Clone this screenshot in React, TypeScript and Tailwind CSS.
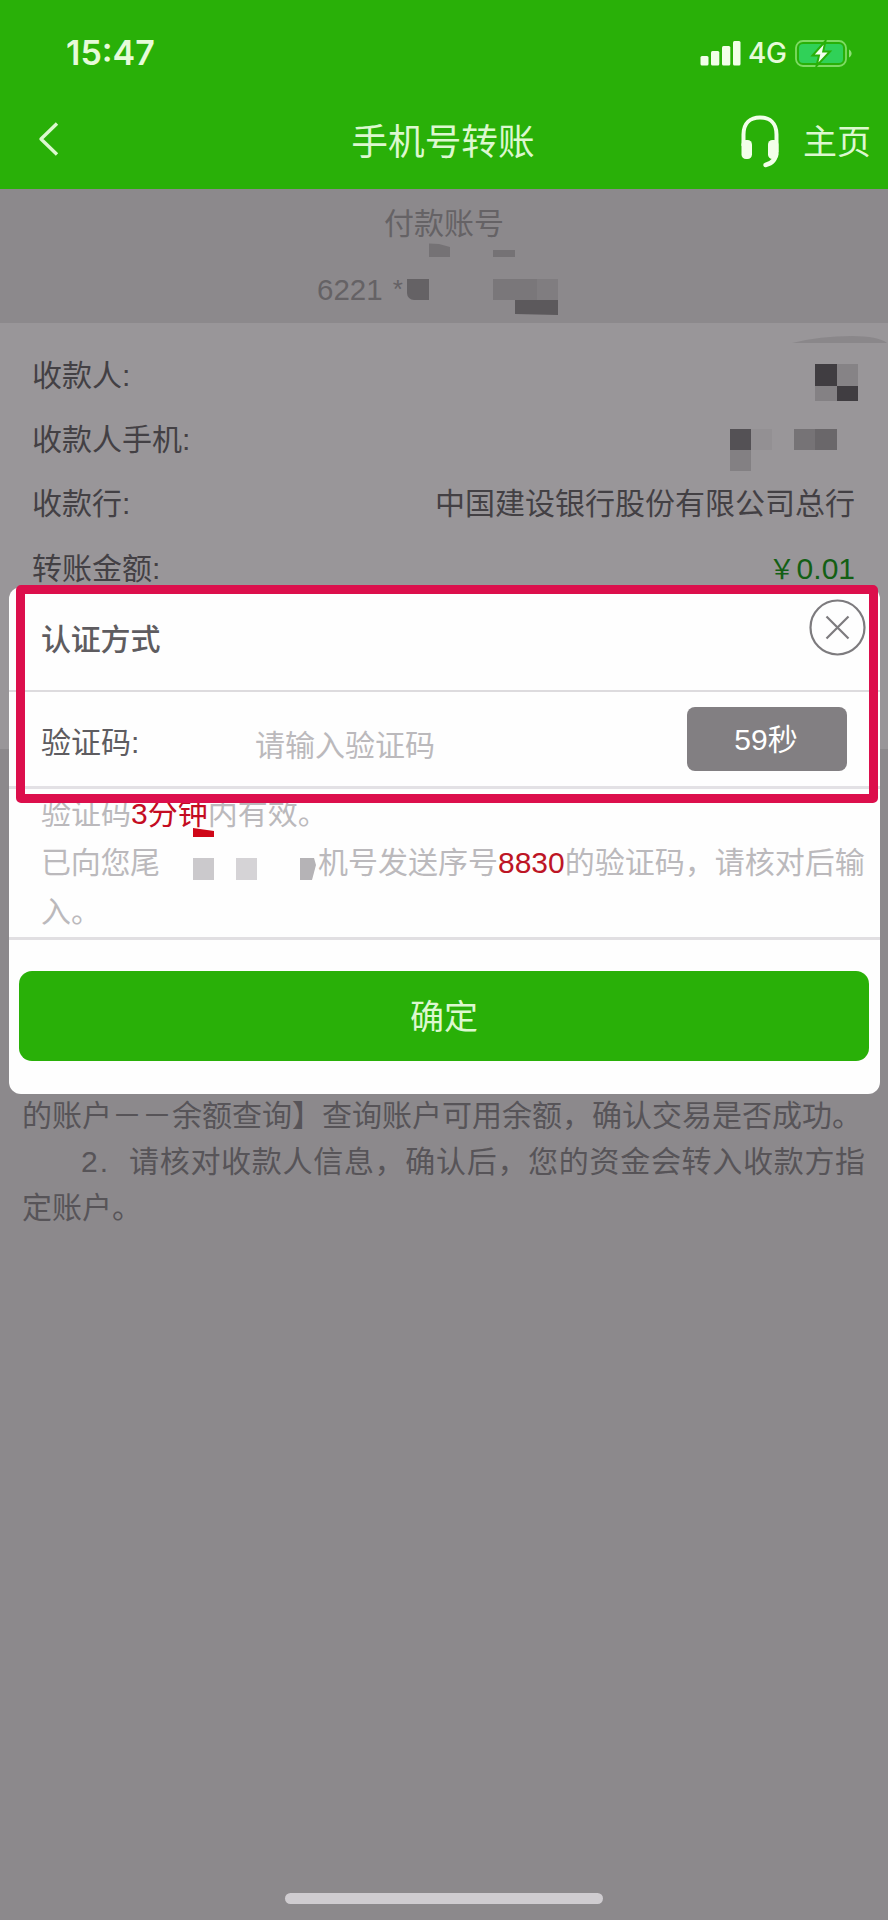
import type { ReactNode } from "react";

function StatusBar() {
  return (
    <div className="flex h-[106px] items-start justify-between pl-[66px] pr-[36px]">
      <span className="mt-[32px] font-['Inter'] text-[34px] font-semibold leading-[42px] text-[#e6fbd9]">
        15:47
      </span>
      <div className="mt-[39px] flex items-start">
        <svg width="41" height="28" viewBox="0 0 41 28" fill="#f2ffe9">
          <rect x="0.5" y="17" width="8" height="9.5" rx="1.5" />
          <rect x="11" y="12" width="8.3" height="14.5" rx="1.5" />
          <rect x="22" y="7" width="8.3" height="19.5" rx="1.5" />
          <rect x="33" y="2" width="7.5" height="24.5" rx="1.5" />
        </svg>
        <span className="ml-[7px] w-[47px] font-['Inter'] text-[28px] font-medium leading-[29px] tracking-[-0.5px] text-[#e6fbd9]">
          4G
        </span>
        <svg width="57" height="28" viewBox="0 0 57 28">
          <rect x="1" y="2" width="50" height="25" rx="7" fill="none" stroke="#7edb63" strokeWidth="1.8" />
          <rect x="4" y="5" width="44" height="19" rx="4" fill="#30d158" />
          <path d="M54 10.5 C57.4 12 57.4 17 54 18.5 Z" fill="#8fe077" />
          <path
            d="M30.5 2 L17.5 16.5 H24 L21.5 27 L35 12.5 H28.2 Z"
            fill="#f4ffee"
            stroke="#29b008"
            strokeWidth="2"
          />
        </svg>
      </div>
    </div>
  );
}

function NavBar() {
  return (
    <div className="grid h-[82px] grid-cols-[1fr_auto_1fr] items-start text-[#dcf8cf]">
      <svg className="ml-[36px] mt-[14px]" width="24" height="38" viewBox="0 0 24 38" fill="none">
        <path d="M21 3.500 L5 19 L21 34.500" stroke="currentColor" strokeWidth="3.400" strokeLinejoin="round" />
      </svg>
      <h1 className="mr-[2px] mt-[12px] text-[36.7px] font-normal leading-[50px]">手机号转账</h1>
      <div className="flex items-start justify-end pr-[17px]">
        <svg className="mt-[8px]" width="42" height="54" viewBox="0 0 42 54" fill="none">
          <path d="M3.500 32 V20.500 C3.500 9 10.500 3.500 20 3.500 C29.500 3.500 36.500 9 36.500 20.500 V38" stroke="#f2ffe9" strokeWidth="4" />
          <rect x="1.500" y="26" width="10.500" height="19" rx="4.500" fill="#f2ffe9" />
          <rect x="28" y="26" width="10.500" height="19" rx="4.500" fill="#f2ffe9" />
          <path d="M36 38 C36 46 32 49.500 25.500 51" stroke="#f2ffe9" strokeWidth="4.500" strokeLinecap="round" />
        </svg>
        <span className="ml-[21px] mt-[11px] text-[34px] leading-[50px]">主页</span>
      </div>
    </div>
  );
}

function Row({ label, children }: { label: string; children?: ReactNode }) {
  return (
    <div className="flex h-[64.3px] items-center justify-between pl-[32px] pr-[33px] text-[30px] text-[#434044]">
      <span>{label}</span>
      {children}
    </div>
  );
}

function Mosaic() {
  return (
    <>
      <svg className="absolute left-[426px] top-[240px]" width="136" height="78" viewBox="0 0 136 78">
        <path d="M3 3.500 L13 4 L24 7 V17 H3 Z" fill="#757275" />
        <rect x="67" y="10" width="22" height="7" fill="#757275" />
        <rect x="67" y="39" width="44" height="21" fill="#7a777a" />
        <rect x="111" y="39" width="21" height="21" fill="#807d80" />
        <path d="M89 60 H132 V75 L89 74 Z" fill="#5c595c" />
      </svg>
      <svg className="absolute left-[790px] top-[335px]" width="98" height="68" viewBox="0 0 98 68">
        <path d="M2 8 Q30 1 62 1 Q88 1 97 8 Z" fill="#8a878a" />
        <rect x="25" y="29" width="22" height="22" fill="#403d41" />
        <rect x="47" y="29" width="21" height="22" fill="#868386" />
        <rect x="25" y="51" width="22" height="15" fill="#848184" />
        <rect x="47" y="51" width="21" height="15" fill="#403d41" />
      </svg>
      <svg className="absolute left-[729px] top-[428px]" width="109" height="44" viewBox="0 0 109 44">
        <rect x="1" y="1" width="21" height="21" fill="#545155" />
        <rect x="22" y="1" width="21" height="21" fill="#939093" />
        <rect x="1" y="22" width="21" height="21" fill="#838083" />
        <rect x="65" y="1" width="21" height="21" fill="#767376" />
        <rect x="86" y="1" width="22" height="21" fill="#6a676a" />
      </svg>
    </>
  );
}

function VerifyDialog() {
  return (
    <section className="absolute left-[9px] top-[587px] flex h-[507px] w-[871px] flex-col rounded-[12px] bg-[#fefefe]">
      <header className="flex h-[105px] items-start justify-between border-b-2 border-[#dddbde] pl-[32px] pr-[14px]">
        <h2 className="mt-[30px] text-[30px] font-medium leading-[45px] tracking-[-0.2px] text-[#5e5c60]">认证方式</h2>
        <svg className="mt-[12px]" width="57" height="57" viewBox="0 0 57 57" fill="none" stroke="#7d7b7e" strokeWidth="2.200">
          <circle cx="28.500" cy="28.500" r="27" />
          <path d="M17.500 17.500 L39.500 39.500 M39.500 17.500 L17.500 39.500" />
        </svg>
      </header>
      <div className="flex h-[97px] items-start border-b-[3px] border-[#e3e1e5] pl-[32px] pr-[33px]">
        <label className="mt-[28px] w-[214px] text-[30px] leading-[45px] text-[#5e5c60]">验证码:</label>
        <span className="mt-[31px] flex-1 text-[30px] leading-[45px] text-[#bbb9bc]">请输入验证码</span>
        <button className="mt-[15px] h-[64px] w-[160px] rounded-[8px] bg-[#827f82] pr-[2px] text-[30px] leading-[65px] text-white">
          59秒
        </button>
      </div>
      <div className="relative h-[151px] border-b-[3px] border-[#e1dfe2] pl-[32px] text-[30px] leading-[49px] text-[#bbb9bc]">
        <p>
          验证码<span className="text-[#c40c22]">3分钟</span>内有效。
        </p>
        <p className="flex whitespace-nowrap">
          <span className="w-[277px] tracking-[-0.3px]">已向您尾</span>
          <span>
            机号发送序号<span className="text-[#bd1525]">8830</span>的验证码，请核对后输
          </span>
        </p>
        <p>入。</p>
        <svg className="absolute left-[183px] top-[36px]" width="126" height="56" viewBox="0 0 126 56">
          <path d="M1 3 L22 6 V12 H1 Z" fill="#cf0718" />
          <rect x="1" y="33" width="21" height="22" fill="#cbc9cc" />
          <rect x="44" y="33" width="21" height="22" fill="#d5d3d6" />
          <path d="M108 33 H122 L124 40 L120 55 H108 Z" fill="#b5b3b6" />
        </svg>
      </div>
      <button className="ml-[10px] mr-[11px] mt-[31px] h-[90px] rounded-[13px] bg-[#29b008] pt-[3px] text-[34px] text-[#dcf8cf]">
        确定
      </button>
    </section>
  );
}

export default function App() {
  return (
    <main className="relative flex h-[1920px] w-[888px] flex-col overflow-hidden bg-[#8c898c] font-['Liberation_Sans','Noto_Sans_CJK_SC',sans-serif]">
      <div className="h-[189px] bg-[#29b008]">
        <StatusBar />
        <NavBar />
      </div>
      <div className="flex h-[134px] flex-col text-[#656265]">
        <span className="mt-[12px] self-center text-[30px] leading-[45px]">付款账号</span>
        <div className="mt-[21px] flex items-center pl-[317px] text-[29.5px] leading-[45px]">
          6221&nbsp;
          <span className="ml-[2px] text-[26px]">*</span>
          <span className="ml-[4px] h-[21px] w-[22px] rounded-bl-[7px] bg-[#656265]" />
        </div>
      </div>
      <div className="h-[426px] bg-[#999699] pt-[20px]">
        <Row label="收款人:" />
        <Row label="收款人手机:" />
        <Row label="收款行:">
          <span>中国建设银行股份有限公司总行</span>
        </Row>
        <Row label="转账金额:">
          <span className="text-[#135f14]">
            <span className="mr-[1px] text-[27px]">￥</span>0.01
          </span>
        </Row>
      </div>
      <div className="mt-[344px] whitespace-nowrap pl-[22px] text-[30px] leading-[46px] text-[#575458]">
        <p>的账户－－余额查询】查询账户可用余额，确认交易是否成功。</p>
        <p className="pl-[59px] tracking-[0.7px]">
          <span className="inline-block w-[48px] tracking-[2px]">2.</span>请核对收款人信息，确认后，您的资金会转入收款方指
        </p>
        <p>定账户。</p>
      </div>
      <Mosaic />
      <VerifyDialog />
      <div className="absolute left-[16px] top-[585px] h-[218px] w-[862px] rounded-[5px] border-[9px] border-[#dc0f4c]" />
      <div className="absolute bottom-[16px] left-[285px] h-[11px] w-[318px] rounded-full bg-[#cfccd0]" />
    </main>
  );
}
